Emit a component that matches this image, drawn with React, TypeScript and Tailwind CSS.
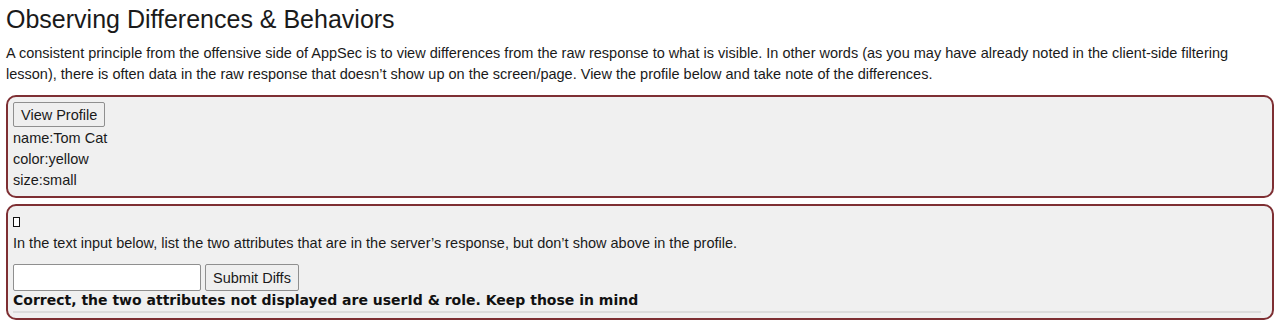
import React, { useState } from 'react';

export default function App() {
  const [diffs, setDiffs] = useState('');

  return (
    <div className="bg-white px-[6px] text-[#1a1a1a] font-['Liberation_Sans',Arial,sans-serif]">
      {/* Header */}
      <h1 className="pt-[4px] text-[25px] leading-[30px] font-normal">Observing Differences &amp; Behaviors</h1>
      <p className="mt-[9px] text-[14.5px] leading-[21px]">
        A consistent principle from the offensive side of AppSec is to view differences from the raw response to what is visible. In other words (as you may have already noted in the client-side filtering lesson), there is often data in the raw response that doesn’t show up on the screen/page. View the profile below and take note of the differences.
      </p>

      {/* Profile box */}
      <div className="mt-[10px] rounded-[10px] border-2 border-[#7e2f33] bg-[#f0f0f0] px-[5px] pt-[5px] pb-[5px]">
        <button className="h-[25px] rounded-[2px] border border-[#8f8f8f] bg-[#efefef] px-[7px] text-[14.5px] leading-[20px]">View Profile</button>
        <div className="mt-[1px] text-[14.5px] leading-[21px]">
          <div>name:Tom Cat</div>
          <div>color:yellow</div>
          <div>size:small</div>
        </div>
      </div>

      {/* Diffs box */}
      <div className="mt-[6px] rounded-[10px] border-2 border-[#7e2f33] bg-[#f0f0f0] px-[5px] pt-[9px] pb-[5px]">
        <div className="h-[14px] flex items-center">
          <span className="inline-block h-[10px] w-[7px] border border-[#111] bg-white" />
        </div>
        <p className="mt-[4px] text-[14.5px] leading-[21px]">
          In the text input below, list the two attributes that are in the server’s response, but don’t show above in the profile.
        </p>
        <div className="mt-[10px] flex items-center gap-[4px]">
          <input
            value={diffs}
            onChange={(e) => setDiffs(e.target.value)}
            className="h-[27px] w-[188px] rounded-[2px] border border-[#8f8f8f] bg-white px-[2px] text-[14.5px]"
          />
          <button className="h-[27px] rounded-[2px] border border-[#8f8f8f] bg-[#efefef] px-[7px] text-[14.5px] leading-[20px]">Submit Diffs</button>
        </div>
        <div className="text-[14px] leading-[19px] font-bold font-['DejaVu_Sans',sans-serif] text-[#111]">
          Correct, the two attributes not displayed are userId &amp; role. Keep those in mind
        </div>
        <hr className="mt-[1px] mr-[6px] border-t-2 border-[#dcdcdc]" />
      </div>
    </div>
  );
}
